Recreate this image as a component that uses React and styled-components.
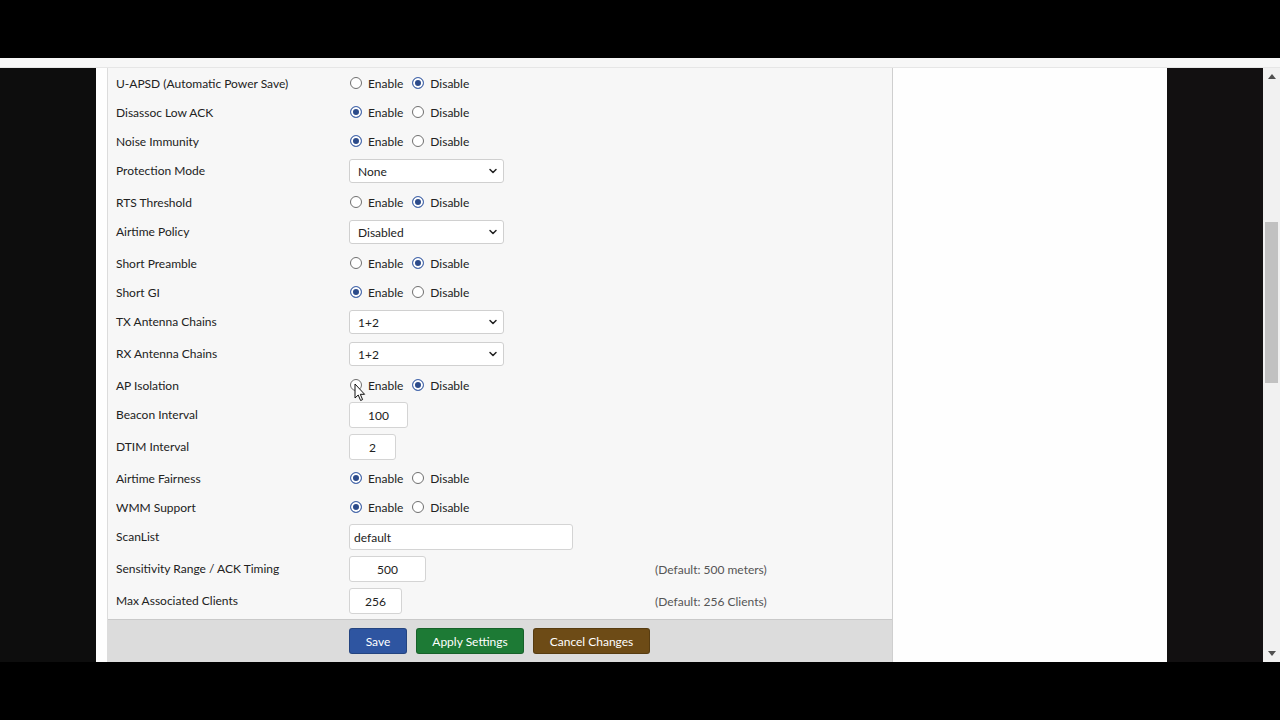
import React from "react";
import styled, { createGlobalStyle } from "styled-components";
import { ChevronDown } from "lucide-react";

const GlobalStyle = createGlobalStyle`
	html, body {
		margin: 0;
		padding: 0;
		background: #000;
		font-family: "Lato", "Liberation Sans", sans-serif;
		overflow: hidden;
	}
`;

const Screen = styled.div`
	width: 1280px;
	height: 720px;
	display: flex;
	flex-direction: column;
	background: #000;
`;

const TopBand = styled.div`
	height: 58px;
	background: #000;
`;

const Strip = styled.div`
	height: 10px;
	background: #f7f7f7;
	border-bottom: 1px solid #e6e6e6;
	box-sizing: border-box;
`;

const Viewport = styled.div`
	height: 594px;
	display: flex;
	overflow: hidden;
`;

const SideBlack = styled.div`
	width: 96px;
	flex: none;
	background: ${(props) => (props.right ? "#121011" : "#0d0d0d")};
`;

const Page = styled.div`
	flex: 1;
	background: #fefefe;
	padding-left: 11px;
	overflow: hidden;
`;

const Panel = styled.div`
	width: 786px;
	box-sizing: border-box;
	background: #f7f7f7;
	border-left: 1px solid #dcdcdc;
	border-right: 1px solid #cfcfcf;
	height: 100%;
	display: flex;
	flex-direction: column;
`;

const Rows = styled.div`
	padding-left: 8px;
	padding-bottom: 2px;
`;

const Row = styled.div`
	display: grid;
	grid-template-columns: 233px 306px 1fr;
	align-items: center;
	height: ${(props) => props.h}px;
	font-size: 12px;
	color: #222;
`;

const Label = styled.div`
	margin-top: ${(props) => props.up || 0}px;
`;

const Note = styled.div`
	color: #555;
	font-size: 12px;
`;

const RadioGroup = styled.div`
	display: flex;
	align-items: center;
	padding-top: 1px;
`;

const RadioLabel = styled.label`
	position: relative;
	display: flex;
	align-items: center;
	gap: 6px;
	margin-right: 8px;
	margin-left: 1px;
`;

const Radio = styled.input.attrs({ type: "radio" })`
	appearance: none;
	margin: 0;
	width: 12px;
	height: 12px;
	border-radius: 50%;
	border: 1px solid #6f6f6f;
	background: #fff;
	box-sizing: border-box;

	&:checked {
		border-color: #4a6cb0;
		background: #2c4b8a;
		box-shadow: inset 0 0 0 2px #fff;
	}
`;

const SelectWrap = styled.div`
	position: relative;
	width: 155px;
	height: 24px;

	svg {
		position: absolute;
		right: 5px;
		top: 6px;
		pointer-events: none;
	}
`;

const Select = styled.select`
	appearance: none;
	width: 100%;
	height: 100%;
	border: 1px solid #d0d0d0;
	border-radius: 3px;
	background: #fff;
	padding: 0 8px;
	font-family: inherit;
	font-size: 12px;
	color: #222;
`;

const TextInput = styled.input`
	width: ${(props) => props.w}px;
	height: 26px;
	box-sizing: border-box;
	border: 1px solid #d4d4d4;
	border-radius: 3px;
	background: #fff;
	font-family: inherit;
	font-size: 12px;
	color: #222;
	text-align: ${(props) => (props.left ? "left" : "center")};
	padding: 0 4px;
`;

const Footer = styled.div`
	flex: 1;
	background: #dcdcdc;
	border-top: 1px solid #c9c9c9;
	padding: 8px 0 0 241px;
	display: flex;
	gap: 9px;
	align-items: flex-start;
`;

const colors = {
	blue: "#2e55a1",
	green: "#1d7a35",
	brown: "#6d4b16",
};

const Button = styled.button`
	height: 26px;
	width: ${(props) => props.w}px;
	padding: 0;
	border: 1px solid rgba(0, 0, 0, 0.2);
	border-radius: 3px;
	background: ${(props) => colors[props.tone]};
	color: #fff;
	font-family: inherit;
	font-size: 12px;
`;

const Scrollbar = styled.div`
	width: 17px;
	flex: none;
	background: #f1f1f1;
	display: flex;
	flex-direction: column;
	align-items: center;
`;

const Arrow = styled.div`
	height: 17px;
	display: flex;
	align-items: center;
	justify-content: center;
	width: 100%;
`;

const Thumb = styled.div`
	margin-top: 137px;
	width: 13px;
	height: 161px;
	background: #c1c1c1;
`;

const Spacer = styled.div`
	flex: 1;
`;

const Cursor = styled.svg`
	position: absolute;
	left: 4px;
	top: 5px;
`;

const RadioPair = ({ enabled, name, cursor }) => (
	<RadioGroup>
		<RadioLabel>
			<Radio name={name} defaultChecked={enabled} />
			Enable
			{cursor && (
				<Cursor width="12" height="19" viewBox="0 0 12 19">
					<path
						d="M1 1 L1 15 L4.2 12 L6.6 17.5 L8.6 16.6 L6.3 11.3 L10.6 11.3 Z"
						fill="#fff"
						stroke="#111"
						strokeWidth="1"
						strokeLinejoin="round"
					/>
				</Cursor>
			)}
		</RadioLabel>
		<RadioLabel>
			<Radio name={name} defaultChecked={!enabled} />
			Disable
		</RadioLabel>
	</RadioGroup>
);

const Dropdown = ({ value }) => (
	<SelectWrap>
		<Select defaultValue={value}>
			<option>{value}</option>
		</Select>
		<ChevronDown size={12} strokeWidth={3} color="#222" />
	</SelectWrap>
);

const rows = [
	{ label: "U-APSD (Automatic Power Save)", type: "radio", enabled: false },
	{ label: "Disassoc Low ACK", type: "radio", enabled: true },
	{ label: "Noise Immunity", type: "radio", enabled: true },
	{ label: "Protection Mode", type: "select", value: "None" },
	{ label: "RTS Threshold", type: "radio", enabled: false },
	{ label: "Airtime Policy", type: "select", value: "Disabled" },
	{ label: "Short Preamble", type: "radio", enabled: false },
	{ label: "Short GI", type: "radio", enabled: true },
	{ label: "TX Antenna Chains", type: "select", value: "1+2" },
	{ label: "RX Antenna Chains", type: "select", value: "1+2" },
	{ label: "AP Isolation", type: "radio", enabled: false, cursor: true },
	{ label: "Beacon Interval", type: "input", value: "100", w: 59 },
	{ label: "DTIM Interval", type: "input", value: "2", w: 47 },
	{ label: "Airtime Fairness", type: "radio", enabled: true },
	{ label: "WMM Support", type: "radio", enabled: true },
	{ label: "ScanList", type: "input", value: "default", w: 224, left: true },
	{ label: "Sensitivity Range / ACK Timing", type: "input", value: "500", w: 77, note: "(Default: 500 meters)" },
	{ label: "Max Associated Clients", type: "input", value: "256", w: 53, note: "(Default: 256 Clients)" },
];

const heights = { radio: 29, select: 32, input: 32 };

const renderControl = (row, i) => {
	if (row.type === "radio") {
		return <RadioPair name={`r${i}`} enabled={row.enabled} cursor={row.cursor} />;
	}
	if (row.type === "select") {
		return <Dropdown value={row.value} />;
	}
	return <TextInput w={row.w} left={row.left} defaultValue={row.value} />;
};

const App = () => (
	<Screen>
		<GlobalStyle />
		<TopBand />
		<Strip />
		<Viewport>
			<SideBlack />
			<Page>
				<Panel>
					<Rows>
						{rows.map((row, i) => (
							<Row key={row.label} h={heights[row.type]}>
								<Label up={row.type === "radio" ? 1 : -1}>{row.label}</Label>
								<div>{renderControl(row, i)}</div>
								{row.note ? <Note>{row.note}</Note> : <div />}
							</Row>
						))}
					</Rows>
					<Footer>
						<Button tone="blue" w={58}>Save</Button>
						<Button tone="green" w={108}>Apply Settings</Button>
						<Button tone="brown" w={117}>Cancel Changes</Button>
					</Footer>
				</Panel>
			</Page>
			<SideBlack right />
			<Scrollbar>
				<Arrow>
					<svg width="8" height="5" viewBox="0 0 8 5">
						<path d="M4 0 L8 5 L0 5 Z" fill="#505050" />
					</svg>
				</Arrow>
				<Thumb />
				<Spacer />
				<Arrow>
					<svg width="8" height="5" viewBox="0 0 8 5">
						<path d="M0 0 L8 0 L4 5 Z" fill="#505050" />
					</svg>
				</Arrow>
			</Scrollbar>
		</Viewport>
	</Screen>
);

export default App;
